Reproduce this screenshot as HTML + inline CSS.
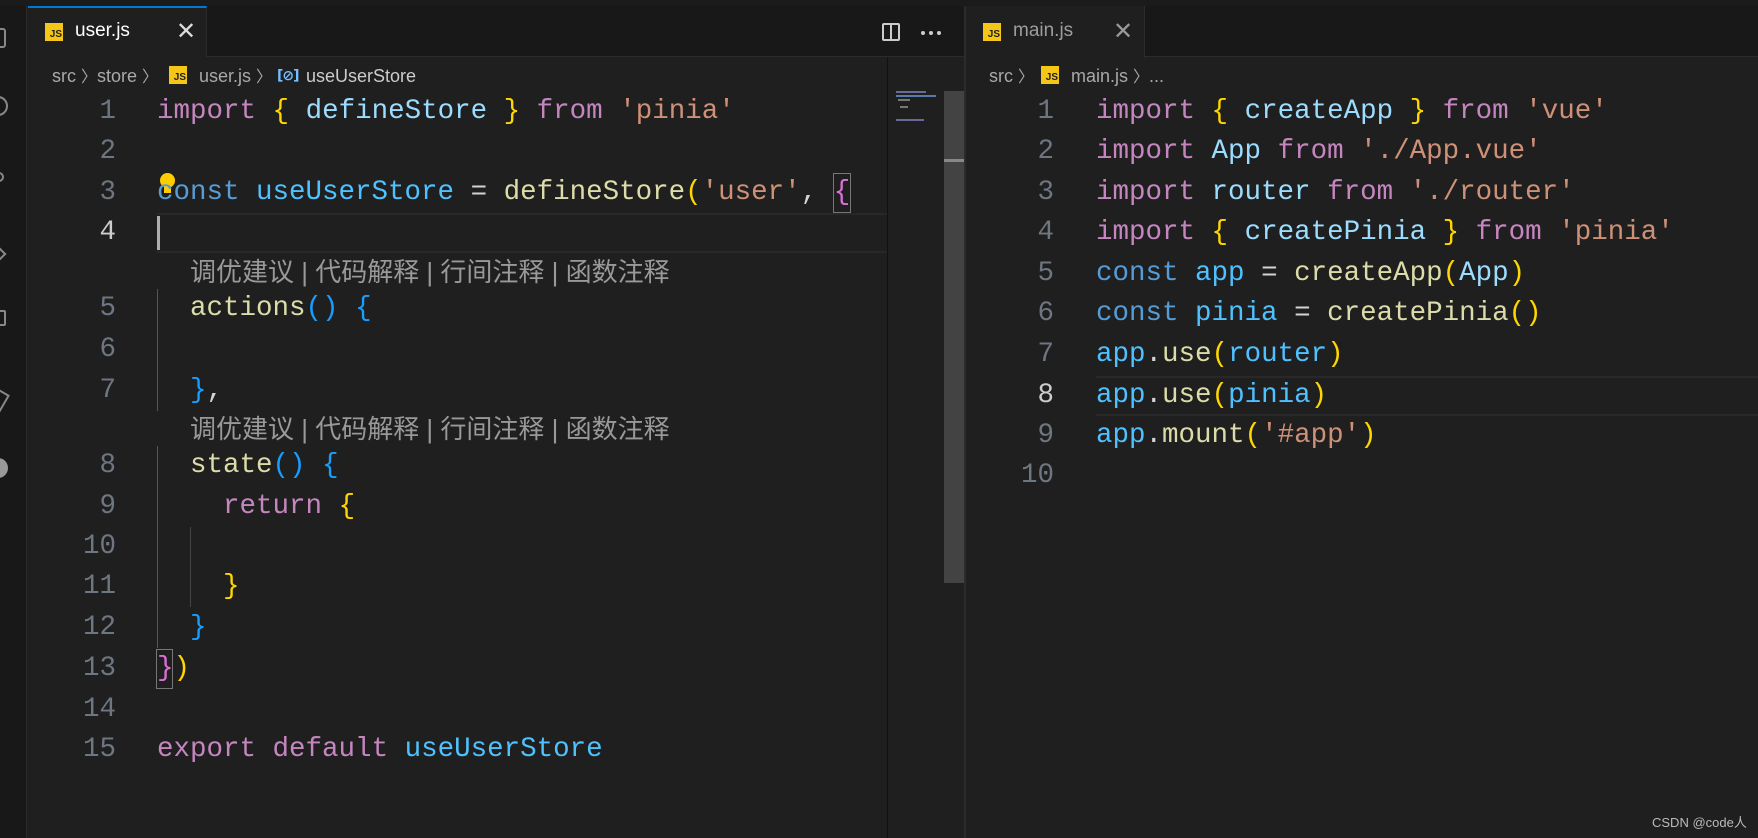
<!DOCTYPE html>
<html><head><meta charset="utf-8"><style>
*{margin:0;padding:0;box-sizing:border-box}
body{width:1758px;height:838px;background:#1f1f1f;overflow:hidden;position:relative;font-family:"Liberation Sans","Noto Sans CJK SC",sans-serif}
.abs{position:absolute}
.code{font-family:"Liberation Mono","Noto Sans CJK SC",monospace;font-size:27.5px;white-space:pre;line-height:40px;height:40px}
.ln{text-align:right;color:#6e7681;width:60px}
.k{color:#c586c0}.c{color:#569cd6}.v{color:#4fc1ff}.p{color:#9cdcfe}.f{color:#dcdcaa}.s{color:#ce9178}.o{color:#d4d4d4}
.y{color:#ffd700}.m{color:#da70d6}.b{color:#179fff}
.lens{font-family:"Liberation Sans","Noto Sans CJK SC",sans-serif;font-size:26px;color:#999;white-space:pre;line-height:35px}
.js{position:absolute;width:18px;height:18px;background:#f5c518;color:#1f1f1f;font:bold 10px "Liberation Sans",sans-serif;text-align:right;padding:6px 1px 0 0;line-height:12px}
.crumb{font-size:18px;color:#a9a9a9;white-space:pre;line-height:22px}
</style></head><body>
<div class="abs" style="left:0;top:0;width:1758px;height:6px;background:#1b1b1b"></div>
<div class="abs" style="left:0;top:6px;width:27px;height:832px;background:#181818;border-right:1px solid #2b2b2b"></div>
<div class="abs" style="left:-10px;top:28px;width:16px;height:20px;border:2px solid #888;border-radius:3px"></div>
<div class="abs" style="left:-12px;top:96px;width:20px;height:20px;border:2px solid #888;border-radius:50%"></div>
<div class="abs" style="left:-6px;top:172px;width:10px;height:10px;border:2px solid #888;border-radius:50%"></div>
<div class="abs" style="left:-8px;top:248px;width:12px;height:12px;border-top:2px solid #888;border-right:2px solid #888;transform:rotate(45deg)"></div>
<div class="abs" style="left:-8px;top:310px;width:14px;height:16px;border:2px solid #888;border-radius:2px"></div>
<div class="abs" style="left:-10px;top:390px;width:16px;height:20px;border:2px solid #888;transform:rotate(30deg)"></div>
<div class="abs" style="left:-12px;top:458px;width:20px;height:20px;background:#999;border-radius:50%"></div>

<div class="abs" style="left:28px;top:6px;width:936px;height:51px;background:#181818;border-bottom:1px solid #2b2b2b"></div>
<div class="abs" style="left:28px;top:6px;width:179px;height:51px;background:#1f1f1f;border-top:2px solid #0078d4;border-right:1px solid #2b2b2b"></div>
<div class="js" style="left:45px;top:23px">JS</div>
<div class="abs" style="left:75px;top:20px;font-size:19px;color:#fff">user.js</div>
<div class="abs" style="left:176px;top:17px;font-size:24px;color:#ddd;font-family:'DejaVu Sans',sans-serif">✕</div>
<div class="abs" style="left:882px;top:23px;width:18px;height:18px;border:2px solid #ccc;border-radius:2px"></div>
<div class="abs" style="left:890px;top:23px;width:2px;height:18px;background:#ccc"></div>
<div class="abs" style="left:921px;top:31px;width:4px;height:4px;background:#ccc;border-radius:50%"></div>
<div class="abs" style="left:929px;top:31px;width:4px;height:4px;background:#ccc;border-radius:50%"></div>
<div class="abs" style="left:937px;top:31px;width:4px;height:4px;background:#ccc;border-radius:50%"></div>

<div class="abs crumb" style="left:52px;top:65px">src <span style="font-size:16px">〉</span>store <span style="font-size:16px">〉</span></div>
<div class="js" style="left:169px;top:66px">JS</div>
<div class="abs crumb" style="left:199px;top:65px">user.js <span style="font-size:16px">〉</span></div>
<div class="abs" style="left:277px;top:68px;font:bold 14px 'DejaVu Sans',sans-serif;color:#75beff;letter-spacing:-1px">[⊘]</div>
<div class="abs crumb" style="left:306px;top:65px;color:#ccc">useUserStore</div>

<div class="abs" style="left:157px;top:213px;width:730px;height:40px;border-top:2px solid #282828;border-bottom:2px solid #282828"></div>
<div class="abs" style="left:157px;top:289px;width:1px;height:122px;background:#555"></div>
<div class="abs" style="left:157px;top:446px;width:1px;height:202px;background:#555"></div>
<div class="abs" style="left:190px;top:527px;width:1px;height:80px;background:#444"></div>
<div class="abs" style="left:157px;top:216px;width:3px;height:34px;background:#aeafad"></div>
<div class="abs" style="left:833px;top:173px;width:18px;height:40px;border:1px solid #777"></div>
<div class="abs" style="left:156px;top:649px;width:17px;height:40px;border:1px solid #777"></div>
<div class="abs" style="left:160px;top:173px;width:15px;height:15px;background:#ffcc00;border-radius:50%"></div>
<div class="abs" style="left:164px;top:186px;width:7px;height:7px;background:#ffcc00"></div>

<div class="abs code ln" style="left:56px;top:92px">1</div>
<div class="abs code" style="left:157px;top:92px"><span class="k">import</span> <span class="y">{</span> <span class="p">defineStore</span> <span class="y">}</span> <span class="k">from</span> <span class="s">'pinia'</span></div>
<div class="abs code ln" style="left:56px;top:132px">2</div>
<div class="abs code ln" style="left:56px;top:173px">3</div>
<div class="abs code" style="left:157px;top:173px"><span class="c">const</span> <span class="v">useUserStore</span> <span class="o">=</span> <span class="f">defineStore</span><span class="y">(</span><span class="s">'user'</span><span class="o">,</span> <span class="m">{</span></div>
<div class="abs code ln" style="left:56px;top:213px;color:#ccc">4</div>
<div class="abs lens" style="left:190px;top:255px">调优建议 | 代码解释 | 行间注释 | 函数注释</div>
<div class="abs code ln" style="left:56px;top:289px">5</div>
<div class="abs code" style="left:157px;top:289px">  <span class="f">actions</span><span class="b">()</span> <span class="b">{</span></div>
<div class="abs code ln" style="left:56px;top:330px">6</div>
<div class="abs code ln" style="left:56px;top:371px">7</div>
<div class="abs code" style="left:157px;top:371px">  <span class="b">}</span><span class="o">,</span></div>
<div class="abs lens" style="left:190px;top:412px">调优建议 | 代码解释 | 行间注释 | 函数注释</div>
<div class="abs code ln" style="left:56px;top:446px">8</div>
<div class="abs code" style="left:157px;top:446px">  <span class="f">state</span><span class="b">()</span> <span class="b">{</span></div>
<div class="abs code ln" style="left:56px;top:487px">9</div>
<div class="abs code" style="left:157px;top:487px">    <span class="k">return</span> <span class="y">{</span></div>
<div class="abs code ln" style="left:56px;top:527px">10</div>
<div class="abs code ln" style="left:56px;top:567px">11</div>
<div class="abs code" style="left:157px;top:567px">    <span class="y">}</span></div>
<div class="abs code ln" style="left:56px;top:608px">12</div>
<div class="abs code" style="left:157px;top:608px">  <span class="b">}</span></div>
<div class="abs code ln" style="left:56px;top:649px">13</div>
<div class="abs code" style="left:157px;top:649px"><span class="m">}</span><span class="y">)</span></div>
<div class="abs code ln" style="left:56px;top:690px">14</div>
<div class="abs code ln" style="left:56px;top:730px">15</div>
<div class="abs code" style="left:157px;top:730px"><span class="k">export</span> <span class="k">default</span> <span class="v">useUserStore</span></div>

<div class="abs" style="left:887px;top:57px;width:1px;height:781px;background:#111"></div>
<div class="abs" style="left:896px;top:91px;width:30px;height:2px;background:#6a6a9a"></div>
<div class="abs" style="left:896px;top:95px;width:40px;height:2px;background:#5a7aaa"></div>
<div class="abs" style="left:898px;top:99px;width:12px;height:2px;background:#777"></div>
<div class="abs" style="left:900px;top:106px;width:8px;height:2px;background:#777"></div>
<div class="abs" style="left:896px;top:119px;width:28px;height:2px;background:#6a6a9a"></div>
<div class="abs" style="left:944px;top:91px;width:20px;height:492px;background:#434343"></div>
<div class="abs" style="left:944px;top:159px;width:20px;height:3px;background:#888"></div>
<div class="abs" style="left:964px;top:6px;width:2px;height:832px;background:#2b2b2b"></div>

<div class="abs" style="left:966px;top:6px;width:792px;height:51px;background:#181818;border-bottom:1px solid #2b2b2b"></div>
<div class="abs" style="left:966px;top:6px;width:179px;height:52px;background:#1f1f1f;border-right:1px solid #2b2b2b"></div>
<div class="js" style="left:983px;top:23px">JS</div>
<div class="abs" style="left:1013px;top:20px;font-size:19px;color:#9d9d9d">main.js</div>
<div class="abs" style="left:1113px;top:17px;font-size:24px;color:#999;font-family:'DejaVu Sans',sans-serif">✕</div>
<div class="abs crumb" style="left:989px;top:65px">src <span style="font-size:16px">〉</span></div>
<div class="js" style="left:1041px;top:66px">JS</div>
<div class="abs crumb" style="left:1071px;top:65px">main.js <span style="font-size:16px">〉</span>...</div>

<div class="abs" style="left:1096px;top:376px;width:662px;height:40px;border-top:2px solid #282828;border-bottom:2px solid #282828"></div>
<div class="abs code ln" style="left:994px;top:92px">1</div>
<div class="abs code" style="left:1096px;top:92px"><span class="k">import</span> <span class="y">{</span> <span class="p">createApp</span> <span class="y">}</span> <span class="k">from</span> <span class="s">'vue'</span></div>
<div class="abs code ln" style="left:994px;top:132px">2</div>
<div class="abs code" style="left:1096px;top:132px"><span class="k">import</span> <span class="p">App</span> <span class="k">from</span> <span class="s">'./App.vue'</span></div>
<div class="abs code ln" style="left:994px;top:173px">3</div>
<div class="abs code" style="left:1096px;top:173px"><span class="k">import</span> <span class="p">router</span> <span class="k">from</span> <span class="s">'./router'</span></div>
<div class="abs code ln" style="left:994px;top:213px">4</div>
<div class="abs code" style="left:1096px;top:213px"><span class="k">import</span> <span class="y">{</span> <span class="p">createPinia</span> <span class="y">}</span> <span class="k">from</span> <span class="s">'pinia'</span></div>
<div class="abs code ln" style="left:994px;top:254px">5</div>
<div class="abs code" style="left:1096px;top:254px"><span class="c">const</span> <span class="v">app</span> <span class="o">=</span> <span class="f">createApp</span><span class="y">(</span><span class="p">App</span><span class="y">)</span></div>
<div class="abs code ln" style="left:994px;top:294px">6</div>
<div class="abs code" style="left:1096px;top:294px"><span class="c">const</span> <span class="v">pinia</span> <span class="o">=</span> <span class="f">createPinia</span><span class="y">()</span></div>
<div class="abs code ln" style="left:994px;top:335px">7</div>
<div class="abs code" style="left:1096px;top:335px"><span class="v">app</span><span class="o">.</span><span class="f">use</span><span class="y">(</span><span class="v">router</span><span class="y">)</span></div>
<div class="abs code ln" style="left:994px;top:376px;color:#ccc">8</div>
<div class="abs code" style="left:1096px;top:376px"><span class="v">app</span><span class="o">.</span><span class="f">use</span><span class="y">(</span><span class="v">pinia</span><span class="y">)</span></div>
<div class="abs code ln" style="left:994px;top:416px">9</div>
<div class="abs code" style="left:1096px;top:416px"><span class="v">app</span><span class="o">.</span><span class="f">mount</span><span class="y">(</span><span class="s">'#app'</span><span class="y">)</span></div>
<div class="abs code ln" style="left:994px;top:456px">10</div>

<div class="abs" style="left:1652px;top:812px;font-size:13px;color:#bbb;font-family:'Liberation Sans','Noto Sans CJK SC',sans-serif">CSDN @code人</div>
</body></html>
